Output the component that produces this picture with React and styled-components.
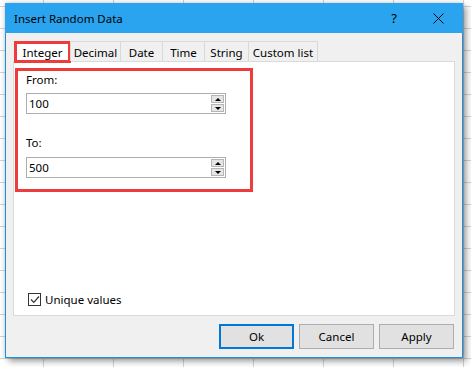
import React, { useState } from 'react'
import styled, { createGlobalStyle } from 'styled-components'

const GlobalStyle = createGlobalStyle`
    html, body {
        margin: 0;
        padding: 0;
    }
    body {
        width: 471px;
        height: 367px;
        overflow: hidden;
        background-color: #ffffff;
        background-image:
            linear-gradient(to right, #d4d4d4 1px, transparent 1px),
            linear-gradient(to bottom, #d4d4d4 1px, transparent 1px);
        background-size: 70px 22px;
        background-position: 43px 6px;
        font-family: "Segoe UI", "Noto Sans", "Open Sans", sans-serif;
        font-size: 11px;
        color: #000;
    }
`;

const Dialog = styled.div`
    box-sizing: border-box;
    width: 458px;
    height: 355px;
    margin: 3px 0 0 5px;
    display: flex;
    flex-direction: column;
    background: #f0f0f0;
    border: 1px solid #1a8fe3;
    border-top: none;
    box-shadow: 0 0 5px rgba(0,0,0,0.22), 4px 4px 6px rgba(0,0,0,0.3);
`;

const TitleBar = styled.div`
    height: 30px;
    margin: 0 -1px;
    padding: 0 10px 0 9px;
    display: flex;
    align-items: center;
    background: #2aa4ee;
`;

const Title = styled.span`
    font-size: 11.5px;
    flex: 1;
`;

const TitleButton = styled.span`
    width: ${props => props.w}px;
    height: 30px;
    display: flex;
    align-items: center;
    justify-content: center;
    margin-left: ${props => props.gap || 0}px;
    font-size: 13px;
`;

const Body = styled.div`
    flex: 1;
    display: flex;
    flex-direction: column;
    padding: 8px 7px 8px 7px;
`;

const TabRow = styled.div`
    display: flex;
    align-items: flex-end;
    padding-left: 1px;
    position: relative;
    z-index: 1;
`;

const Tab = styled.div`
    box-sizing: border-box;
    width: ${props => props.w}px;
    height: ${props => props.active ? 22 : 20}px;
    margin-left: ${props => props.first ? 0 : -1}px;
    margin-bottom: ${props => props.active ? -2 : 0}px;
    display: flex;
    align-items: center;
    justify-content: center;
    background: ${props => props.active ? '#ffffff' : '#f0f0f0'};
    border: ${props => props.active ? '3px solid #ee3b3b' : '1px solid #d9d9d9'};
    border-bottom: ${props => props.active ? '3px solid #ee3b3b' : 'none'};
    padding-top: ${props => props.active ? 0 : 1}px;
    font-size: 11.5px;
`;

const Panel = styled.div`
    box-sizing: border-box;
    height: 255px;
    display: flex;
    flex-direction: column;
    background: #ffffff;
    border: 1px solid #dadada;
    padding: 6px 0 8px 1px;
`;

const Highlight = styled.div`
    box-sizing: border-box;
    width: 238px;
    height: 124px;
    border: 3px solid #ee3b3b;
    padding: 1px 0 0 8px;
    display: flex;
    flex-direction: column;
`;

const Label = styled.div`
    line-height: 16px;
    font-size: 11.5px;
    margin-top: ${props => props.top || 0}px;
`;

const SpinBox = styled.div`
    box-sizing: border-box;
    width: 200px;
    height: 21px;
    margin-top: ${props => props.top}px;
    border: 1px solid #adadad;
    background: #fff;
    display: flex;
    align-items: center;
    padding: 0 1px 0 2px;
`;

const SpinValue = styled.span`
    flex: 1;
    font-size: 11.5px;
`;

const SpinButtons = styled.div`
    display: flex;
    flex-direction: column;
    gap: 1px;
`;

const SpinButton = styled.div`
    box-sizing: border-box;
    width: 13px;
    height: 8px;
    background: #e5e5e5;
    border: 1px solid #b5b5b5;
    display: flex;
    align-items: center;
    justify-content: center;
`;

const Arrow = styled.span`
    width: 0;
    height: 0;
    border-left: 3px solid transparent;
    border-right: 3px solid transparent;
    ${props => props.up ? 'border-bottom: 3px solid #000;' : 'border-top: 3px solid #000;'}
`;

const CheckRow = styled.label`
    margin-top: auto;
    margin-left: 13px;
    display: flex;
    align-items: center;
    gap: 4px;
    height: 16px;
    font-size: 11.5px;
    cursor: pointer;
`;

const CheckBox = styled.span`
    box-sizing: border-box;
    width: 13px;
    height: 13px;
    border: 1px solid #333;
    background: #fff;
    display: flex;
    align-items: center;
    justify-content: center;
`;

const ButtonRow = styled.div`
    display: flex;
    justify-content: flex-end;
    gap: 5px;
    margin-top: 8px;
    padding-right: 1px;
`;

const Button = styled.button`
    box-sizing: border-box;
    width: 75px;
    height: 25px;
    padding: 0;
    font-family: inherit;
    font-size: 11.5px;
    color: #000;
    background: #e1e1e1;
    border: ${props => props.primary ? '2px solid #0078d7' : '1px solid #adadad'};
    cursor: pointer;
`;

const SpinInput = ({ value, top }) => (
    <SpinBox top={top}>
        <SpinValue>{value}</SpinValue>
        <SpinButtons>
            <SpinButton><Arrow up /></SpinButton>
            <SpinButton><Arrow /></SpinButton>
        </SpinButtons>
    </SpinBox>
)

const tabs = [
    { name: 'Integer', w: 57 },
    { name: 'Decimal', w: 51 },
    { name: 'Date', w: 43 },
    { name: 'Time', w: 43 },
    { name: 'String', w: 45 },
    { name: 'Custom list', w: 70 },
];

const App = () => {
    const [unique, setUnique] = useState(true);

    return (
        <>
            <GlobalStyle />
            <Dialog>
                <TitleBar>
                    <Title>Insert Random Data</Title>
                    <TitleButton w={20}>?</TitleButton>
                    <TitleButton w={30} gap={19}>
                        <svg width="11" height="11" viewBox="0 0 11 11">
                            <path d="M0.5 0.5 L10.5 10.5 M10.5 0.5 L0.5 10.5" stroke="#000" strokeWidth="1" />
                        </svg>
                    </TitleButton>
                </TitleBar>
                <Body>
                    <TabRow>
                        {tabs.map((t, i) => (
                            <Tab key={t.name} w={t.w} first={i === 0} active={i === 0}>{t.name}</Tab>
                        ))}
                    </TabRow>
                    <Panel>
                        <Highlight>
                            <Label>From:</Label>
                            <SpinInput value="100" top={5} />
                            <Label top={21}>To:</Label>
                            <SpinInput value="500" top={6} />
                        </Highlight>
                        <CheckRow onClick={() => setUnique(!unique)}>
                            <CheckBox>
                                {unique && (
                                    <svg width="10" height="9" viewBox="0 0 10 9">
                                        <path d="M1 4.5 L3.8 7.3 L9 1.5" stroke="#333" strokeWidth="1.2" fill="none" />
                                    </svg>
                                )}
                            </CheckBox>
                            Unique values
                        </CheckRow>
                    </Panel>
                    <ButtonRow>
                        <Button primary>Ok</Button>
                        <Button>Cancel</Button>
                        <Button>Apply</Button>
                    </ButtonRow>
                </Body>
            </Dialog>
        </>
    )
}

export default App
